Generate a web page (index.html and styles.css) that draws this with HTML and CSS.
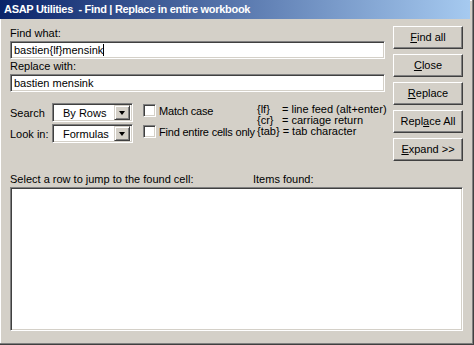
FILE: index.html
```html
<!DOCTYPE html>
<html>
  <head>
    <meta charset="utf-8">
    <meta name="viewport" content="width=device-width, initial-scale=1.0">
    <title>ASAP Utilities - Find | Replace</title>
    <link rel="stylesheet" href="styles.css">
  </head>
  <body>
    <div class="window">
      <div class="titlebar">ASAP Utilities&nbsp; - Find | Replace in entire workbook</div>

      <div class="dialog">
        <div class="top">
          <div class="fields">
            <div class="label">Find what:</div>
            <div class="textbox">bastien{lf}mensink<span class="caret"></span></div>
            <div class="label">Replace with:</div>
            <div class="textbox">bastien mensink</div>

            <div class="options">
              <div class="selects">
                <div class="opt-row">
                  <span class="opt-label">Search</span>
                  <div class="combo">
                    <span class="combo-text">By Rows</span>
                    <span class="combo-btn"><span class="arrow"></span></span>
                  </div>
                </div>
                <div class="opt-row">
                  <span class="opt-label">Look in:</span>
                  <div class="combo">
                    <span class="combo-text">Formulas</span>
                    <span class="combo-btn"><span class="arrow"></span></span>
                  </div>
                </div>
              </div>

              <div class="checks">
                <div class="check-row"><span class="checkbox"></span>Match case</div>
                <div class="check-row"><span class="checkbox"></span>Find entire cells only</div>
              </div>

              <div class="legend">
                <div class="legend-row"><span class="key">{lf}</span>= line feed (alt+enter)</div>
                <div class="legend-row"><span class="key">{cr}</span>= carriage return</div>
                <div class="legend-row"><span class="key">{tab}</span>= tab character</div>
              </div>
            </div>
          </div>

          <div class="buttons">
            <div class="button"><u>F</u>ind all</div>
            <div class="button"><u>C</u>lose</div>
            <div class="button"><u>R</u>eplace</div>
            <div class="button">Repl<u>a</u>ce All</div>
            <div class="button"><u>E</u>xpand &gt;&gt;</div>
          </div>
        </div>

        <div class="results-labels">
          <span class="results-left">Select a row to jump to the found cell:</span>
          <span>Items found:</span>
        </div>
        <div class="listbox"></div>
      </div>
    </div>
  </body>
</html>
```

FILE: styles.css
```css
html, body {
  margin: 0;
  padding: 0;
  background-color: #d4d0c8;
  color: #000;
  font-family: "Liberation Sans", Arial, sans-serif;
  font-size: 11px;
  overflow: hidden;
}
.window {
  width: 474px;
  height: 345px;
  box-sizing: border-box;
  border-right: 1px solid #404040;
  border-bottom: 1px solid #404040;
  box-shadow: inset -1px -1px #808080, inset 1px 1px #fff;
  background: #d4d0c8;
}
.titlebar {
  height: 19px;
  line-height: 18px;
  padding-left: 4px;
  margin-right: 3px;
  color: #fff;
  font-weight: bold;
  letter-spacing: -0.3px;
  white-space: nowrap;
  background: linear-gradient(to right, #0a246a, #a6caf0);
}
.dialog {
  padding: 7px 0 0 10px;
}
.top {
  display: flex;
  gap: 8px;
}
.fields {
  width: 375px;
}
.label {
  line-height: 14px;
  margin-bottom: 1px;
}
.textbox, .combo, .listbox {
  box-sizing: border-box;
  background: #fff;
  border: 1px solid;
  border-color: #808080 #fff #fff #808080;
  box-shadow: inset 1px 1px #404040, inset -1px -1px #d4d0c8;
}
.textbox {
  height: 18px;
  line-height: 16px;
  padding-left: 3px;
}
.caret {
  display: inline-block;
  width: 1px;
  height: 12px;
  background: #000;
  vertical-align: -2px;
}
.options {
  display: flex;
  margin-top: 11px;
}
.selects {
  display: flex;
  flex-direction: column;
  gap: 2px;
}
.opt-row {
  display: flex;
  align-items: center;
}
.opt-label {
  width: 42px;
}
.combo {
  width: 81px;
  height: 19px;
  display: flex;
  align-items: center;
  padding: 2px;
}
.combo-text {
  flex: 1;
  padding-left: 8px;
}
.combo-btn {
  box-sizing: border-box;
  width: 16px;
  height: 15px;
  background: #d4d0c8;
  border: 1px solid;
  border-color: #d4d0c8 #404040 #404040 #d4d0c8;
  box-shadow: inset 1px 1px #fff, inset -1px -1px #808080;
  display: flex;
  align-items: center;
  justify-content: center;
}
.arrow {
  width: 0;
  height: 0;
  border-left: 3.5px solid transparent;
  border-right: 3.5px solid transparent;
  border-top: 4px solid #000;
  margin-top: 1px;
}
.checks {
  margin-left: 10px;
  display: flex;
  flex-direction: column;
  gap: 8px;
  padding-top: 1px;
  min-width: 0;
  white-space: nowrap;
}
.check-row {
  display: flex;
  align-items: center;
  height: 13px;
  letter-spacing: -0.2px;
}
.checkbox {
  box-sizing: border-box;
  flex-shrink: 0;
  width: 13px;
  height: 13px;
  margin-right: 3px;
  background: #fff;
  border: 1px solid;
  border-color: #808080 #fff #fff #808080;
  box-shadow: inset 1px 1px #404040, inset -1px -1px #d4d0c8;
}
.legend {
  flex-shrink: 0;
  margin-left: auto;
  width: 128px;
  padding-top: 1px;
  line-height: 11px;
}
.legend-row {
  display: flex;
  white-space: nowrap;
}
.key {
  min-width: 22px;
  margin-right: 3px;
}
.buttons {
  display: flex;
  flex-direction: column;
  gap: 5px;
}
.button {
  box-sizing: border-box;
  width: 70px;
  height: 23px;
  line-height: 21px;
  text-align: center;
  border: 1px solid;
  border-color: #fff #404040 #404040 #fff;
  box-shadow: inset -1px -1px #808080, inset 1px 1px #d4d0c8;
}
.results-labels {
  display: flex;
  margin-top: 11px;
  line-height: 14px;
}
.results-left {
  width: 243px;
}
.listbox {
  margin-top: 1px;
  width: 453px;
  height: 144px;
}
```
